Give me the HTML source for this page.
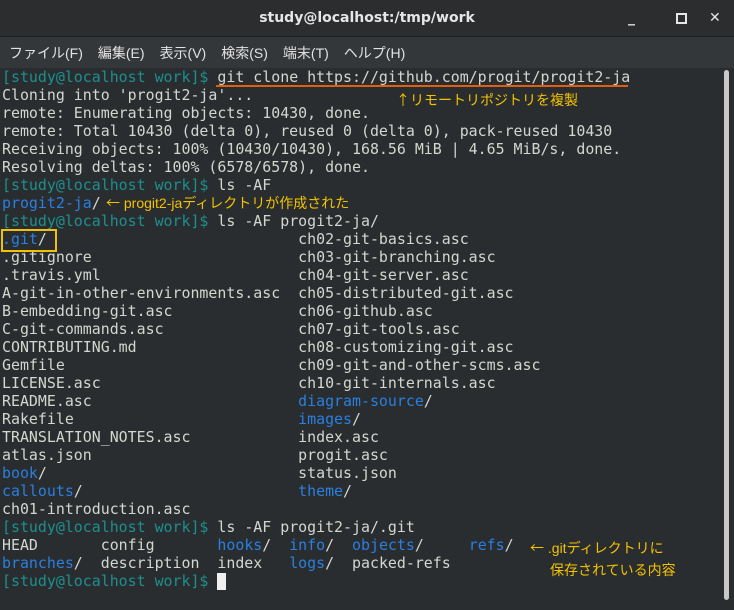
<!DOCTYPE html>
<html><head><meta charset="utf-8"><style>
body{margin:0;width:734px;height:610px;overflow:hidden;background:#2a2d2f;position:relative;font-family:"DejaVu Sans Mono","Liberation Mono",monospace}
#tb{position:absolute;left:0;top:0;width:734px;height:36px;background:#2b2d2e;color:#e6e6e6;font:bold 14px "DejaVu Sans","Liberation Sans",sans-serif;text-align:center;line-height:36px}
#mb{position:absolute;left:0;top:36px;width:734px;height:31px;background:#33373a;border-top:1px solid #1e1f20;color:#e2e2e2;font:14px "Liberation Sans","Noto Sans CJK JP",sans-serif;line-height:32px}
#mb span{margin-left:9px;margin-right:6px}
.l{position:absolute;left:2px;white-space:pre;font-size:14.92px;line-height:18px;color:#d3d7cf}
.p{color:#1d8f8f}.b{color:#2a7fe0}
.a{position:absolute;color:#f2c200;font:14px "Liberation Sans","Noto Sans CJK JP",sans-serif;white-space:nowrap}
.ar{font-family:"Noto Sans CJK JP",sans-serif}
</style></head><body>
<div id="tb">study@localhost:/tmp/work
<span style="position:absolute;left:628px;top:0">_</span>
<span style="position:absolute;left:676px;top:13px;width:7px;height:7px;border:2px solid #e6e6e6"></span>
<span style="position:absolute;left:709px;top:0;font-weight:normal">✕</span></div>
<div id="mb"><span>ファイル(F)</span><span>編集(E)</span><span>表示(V)</span><span>検索(S)</span><span>端末(T)</span><span>ヘルプ(H)</span></div>
<div style="position:absolute;left:724px;top:70px;width:5px;height:530px;background:#c8c8c8;border-radius:3px"></div>

<div class="l" style="top:68px"><span class="p">[study@localhost work]$</span> git clone https://github.com/progit/progit2-ja</div>
<div class="l" style="top:86px">Cloning into 'progit2-ja'...</div>
<div class="l" style="top:104px">remote: Enumerating objects: 10430, done.</div>
<div class="l" style="top:122px">remote: Total 10430 (delta 0), reused 0 (delta 0), pack-reused 10430</div>
<div class="l" style="top:140px">Receiving objects: 100% (10430/10430), 168.56 MiB | 4.65 MiB/s, done.</div>
<div class="l" style="top:158px">Resolving deltas: 100% (6578/6578), done.</div>
<div class="l" style="top:176px"><span class="p">[study@localhost work]$</span> ls -AF</div>
<div class="l" style="top:194px"><span class="b">progit2-ja</span>/</div>
<div class="l" style="top:212px"><span class="p">[study@localhost work]$</span> ls -AF progit2-ja/</div>
<div class="l" style="top:230px"><span class="b">.git</span>/                            ch02-git-basics.asc</div>
<div class="l" style="top:248px">.gitignore                       ch03-git-branching.asc</div>
<div class="l" style="top:266px">.travis.yml                      ch04-git-server.asc</div>
<div class="l" style="top:284px">A-git-in-other-environments.asc  ch05-distributed-git.asc</div>
<div class="l" style="top:302px">B-embedding-git.asc              ch06-github.asc</div>
<div class="l" style="top:320px">C-git-commands.asc               ch07-git-tools.asc</div>
<div class="l" style="top:338px">CONTRIBUTING.md                  ch08-customizing-git.asc</div>
<div class="l" style="top:356px">Gemfile                          ch09-git-and-other-scms.asc</div>
<div class="l" style="top:374px">LICENSE.asc                      ch10-git-internals.asc</div>
<div class="l" style="top:392px">README.asc                       <span class="b">diagram-source</span>/</div>
<div class="l" style="top:410px">Rakefile                         <span class="b">images</span>/</div>
<div class="l" style="top:428px">TRANSLATION_NOTES.asc            index.asc</div>
<div class="l" style="top:446px">atlas.json                       progit.asc</div>
<div class="l" style="top:464px"><span class="b">book</span>/                            status.json</div>
<div class="l" style="top:482px"><span class="b">callouts</span>/                        <span class="b">theme</span>/</div>
<div class="l" style="top:500px">ch01-introduction.asc</div>
<div class="l" style="top:518px"><span class="p">[study@localhost work]$</span> ls -AF progit2-ja/.git</div>
<div class="l" style="top:536px">HEAD       config       <span class="b">hooks</span>/  <span class="b">info</span>/  <span class="b">objects</span>/     <span class="b">refs</span>/</div>
<div class="l" style="top:554px"><span class="b">branches</span>/  description  index   <span class="b">logs</span>/  packed-refs</div>
<div class="l" style="top:572px"><span class="p">[study@localhost work]$</span> </div>
<div style="position:absolute;left:217px;top:573px;width:9px;height:17px;background:#f0f0f0"></div>

<div style="position:absolute;left:216px;top:85px;width:412px;height:2px;background:#e0600f"></div>
<div class="a" style="left:396px;top:90px"><span class="ar">↑</span>リモートリポジトリを複製</div>
<div class="a" style="left:106px;top:193px"><span class="ar">←</span> progit2-jaディレクトリが作成された</div>
<div style="position:absolute;left:1px;top:229px;width:52px;height:19px;border:2px solid #f2c200"></div>
<div class="a" style="left:530px;top:538px"><span class="ar">←</span> .gitディレクトリに</div>
<div class="a" style="left:550px;top:560px">保存されている内容</div>
</body></html>
